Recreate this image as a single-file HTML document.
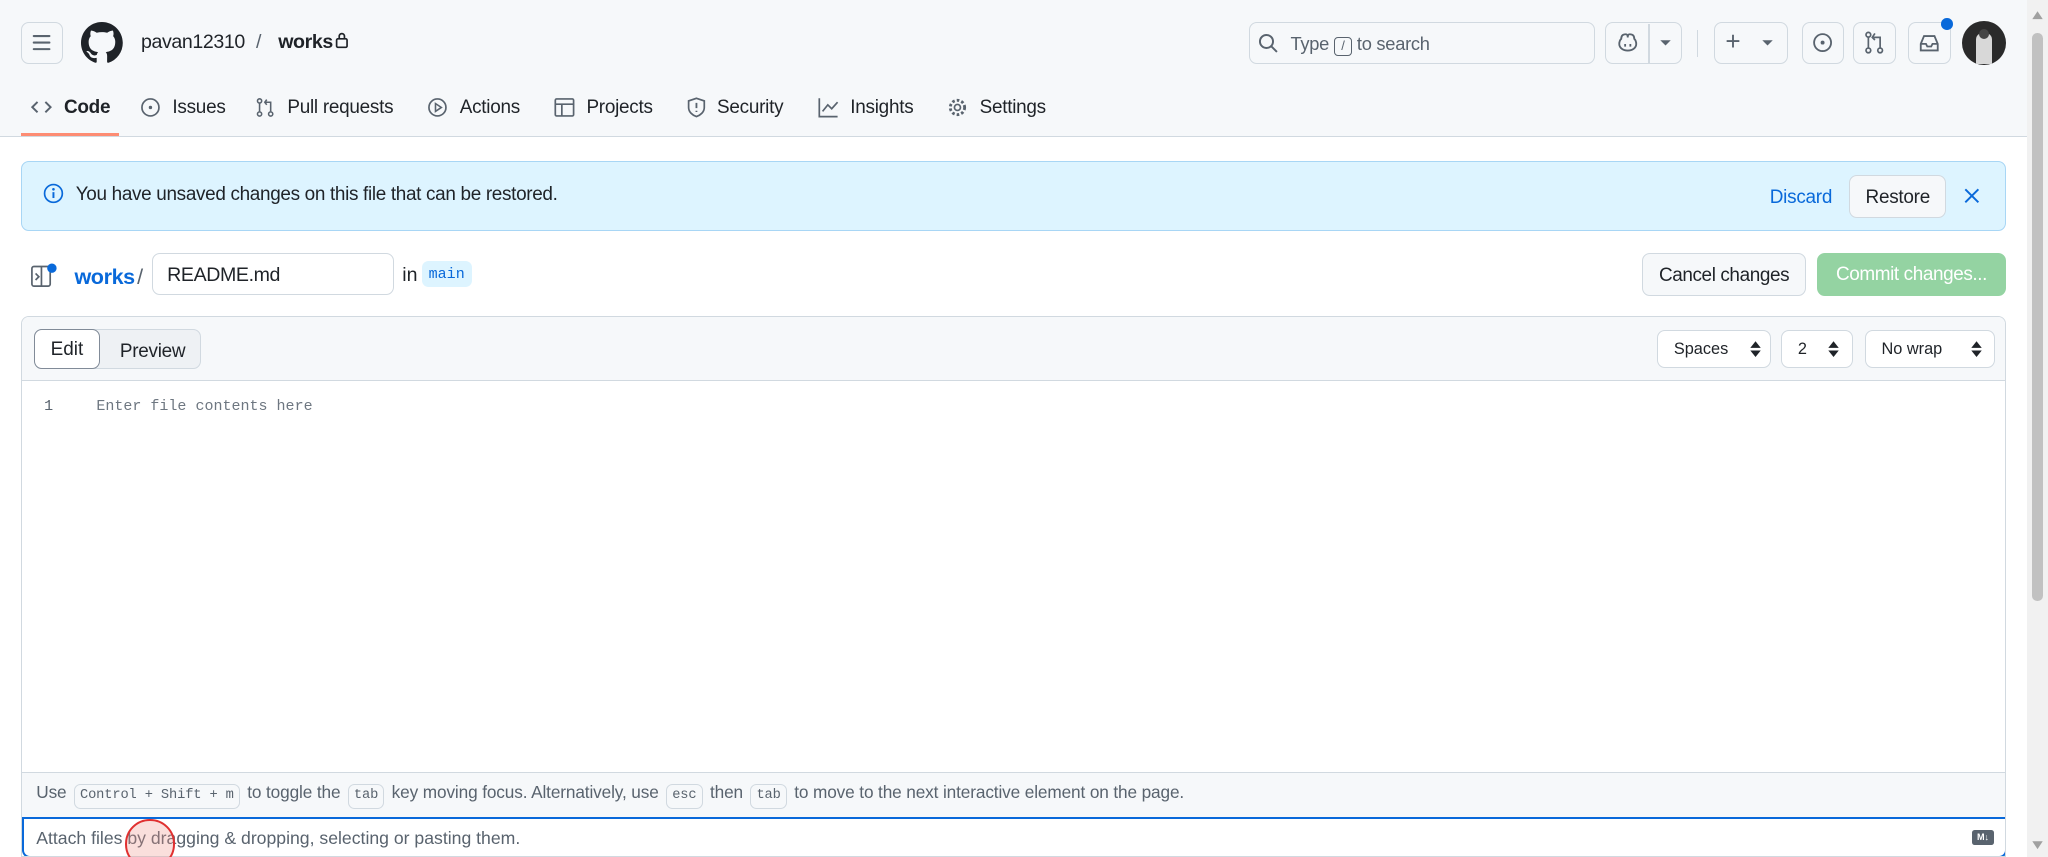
<!DOCTYPE html>
<html><head><meta charset="utf-8"><style>
*{box-sizing:border-box;margin:0;padding:0}
html,body{width:2048px;height:857px;overflow:hidden;background:#fff}
#z{zoom:1.30612;width:1568px;height:656px;position:relative;font-family:"Liberation Sans",sans-serif;color:#1f2328;font-size:14px}
.a{position:absolute}
.btn{position:absolute;border:1px solid #d1d9e0;border-radius:6px;background:#f6f8fa}
.ic{position:absolute}
svg{display:block}
.t{position:absolute;white-space:nowrap}
.n{position:absolute;white-space:nowrap;font-size:14.5px;top:74px;letter-spacing:-0.2px}
.kbd{display:inline-block;border:1px solid #d1d9e0;border-radius:5px;background:#f6f8fa;font-family:"Liberation Mono",monospace;font-size:10.5px;padding:2px 4px;margin:0 2px;line-height:13px}
</style></head><body><div id="z">
<div class="a" style="left:0;top:0;width:1552px;height:105px;background:#f6f8fa;border-bottom:1px solid #d1d9e0"></div>
<div class="btn" style="left:16px;top:17px;width:32px;height:32px"><svg width="30" height="30" viewBox="0 0 30 30"><path d="M9 10h12M9 15h12M9 20h12" stroke="#59636e" stroke-width="1.6" stroke-linecap="round"/></svg></div>
<svg class="ic" style="left:62px;top:17px" width="32" height="32" viewBox="0 0 16 16"><path fill="#1f2328" d="M8 0C3.58 0 0 3.58 0 8c0 3.540 2.290 6.530 5.470 7.590.4.07.55-.17.55-.38 0-.19-.01-.82-.01-1.49-2.010.37-2.530-.49-2.690-.94-.09-.23-.48-.94-.82-1.130-.28-.15-.68-.52-.01-.53.63-.01 1.080.58 1.230.82.72 1.210 1.870.87 2.330.66.07-.52.28-.87.51-1.070-1.780-.2-3.640-.89-3.640-3.950 0-.87.31-1.590.82-2.150-.08-.2-.36-1.020.08-2.120 0 0 .67-.21 2.200.82.64-.18 1.320-.27 2-.27.68 0 1.360.09 2 .27 1.530-1.040 2.200-.82 2.200-.82.44 1.100.16 1.920.08 2.120.51.56.82 1.270.82 2.150 0 3.070-1.870 3.750-3.650 3.950.29.25.54.73.54 1.480 0 1.070-.01 1.930-.01 2.200 0 .21.15.46.55.38A8.013 8.013 0 0016 8c0-4.420-3.580-8-8-8z"/></svg>
<div class="t" style="left:108px;top:24px;font-size:15px;letter-spacing:-0.3px">pavan12310</div>
<div class="t" style="left:196px;top:24px;font-size:15px;color:#59636e">/</div>
<div class="t" style="left:213px;top:24px;font-size:15px;font-weight:bold;letter-spacing:-0.3px">works</div>
<svg class="ic" style="left:256px;top:24px" width="12" height="14" viewBox="0 0 12 14"><rect x="2" y="6" width="8" height="6.5" rx="1" fill="none" stroke="#1f2328" stroke-width="1.3"/><path d="M4 6V4a2 2 0 014 0v2" fill="none" stroke="#1f2328" stroke-width="1.3"/></svg>
<div class="btn" style="left:956px;top:17px;width:265px;height:32px;background:#f6f8fa"></div>
<svg class="ic" style="left:963px;top:25px" width="16" height="16" viewBox="0 0 16 16"><circle cx="6.5" cy="6.5" r="5" fill="none" stroke="#59636e" stroke-width="1.5"/><path d="M10 10l4.5 4.5" stroke="#59636e" stroke-width="1.5"/></svg>
<div class="t" style="left:988px;top:25px;color:#59636e;font-size:14px;letter-spacing:-0.2px">Type <span style="display:inline-block;border:1px solid #59636e;border-radius:3px;font-size:10px;width:14px;text-align:center;line-height:13px">/</span> to search</div>
<div class="btn" style="left:1229px;top:17px;width:59px;height:32px"></div>
<div class="a" style="left:1262px;top:18px;width:1px;height:30px;background:#d1d9e0"></div>
<svg class="ic" style="left:1237px;top:24px" width="18" height="18" viewBox="0 0 18 18"><path d="M4 6c0-3 2-3.5 3.5-3.5S9 4 9 5c0-1 0-2.5 1.5-2.5S14 3 14 6c1 1 1.5 2 1.5 4 0 3-3 5-6.5 5s-6.5-2-6.5-5c0-2 .5-3 1.5-4z" fill="none" stroke="#59636e" stroke-width="1.4"/><path d="M7 10v2M11 10v2" stroke="#59636e" stroke-width="1.4"/></svg>
<svg class="ic" style="left:1270px;top:30px" width="10" height="6"><path d="M1 1h8L5 5z" fill="#59636e"/></svg>
<div class="a" style="left:1299px;top:23px;width:1px;height:21px;background:#d1d9e0"></div>
<div class="btn" style="left:1312px;top:17px;width:57px;height:32px"></div>
<div class="t" style="left:1321px;top:20px;font-size:20px;color:#59636e">+</div>
<svg class="ic" style="left:1348px;top:30px" width="10" height="6"><path d="M1 1h8L5 5z" fill="#59636e"/></svg>
<div class="btn" style="left:1380px;top:17px;width:32px;height:32px"><svg width="30" height="30"><circle cx="15" cy="15" r="6.5" fill="none" stroke="#59636e" stroke-width="1.4"/><circle cx="15" cy="15" r="1.5" fill="#59636e"/></svg></div>
<div class="btn" style="left:1419px;top:17px;width:33px;height:32px"><svg width="31" height="30"><circle cx="11" cy="9" r="1.8" fill="none" stroke="#59636e" stroke-width="1.3"/><circle cx="11" cy="21" r="1.8" fill="none" stroke="#59636e" stroke-width="1.3"/><circle cx="20" cy="21" r="1.8" fill="none" stroke="#59636e" stroke-width="1.3"/><path d="M11 11v8M20 19v-8h-5M16 8l-2 3 2 2" fill="none" stroke="#59636e" stroke-width="1.3"/></svg></div>
<div class="btn" style="left:1461px;top:17px;width:33px;height:32px"><svg width="31" height="30"><path d="M9 16l2.5-6h8l2.5 6v5h-13z M9 16h4l1 2h3l1-2h4" fill="none" stroke="#59636e" stroke-width="1.4"/></svg></div>
<div class="a" style="left:1486px;top:14px;width:9px;height:9px;border-radius:50%;background:#0969da"></div>
<div class="a" style="left:1502px;top:16px;width:34px;height:34px;border-radius:50%;background:#2a2a2a;overflow:hidden"><div class="a" style="left:11px;top:9px;width:12px;height:24px;background:#d8d8d8;border-radius:5px 5px 0 0"></div><div class="a" style="left:13px;top:6px;width:8px;height:8px;border-radius:50%;background:#444"></div></div>
<svg class="ic" style="left:24px;top:75px" width="16" height="14" viewBox="0 0 16 14"><path d="M5 3L1 7l4 4M11 3l4 4-4 4" fill="none" stroke="#59636e" stroke-width="1.5"/></svg>
<div class="n" style="left:49px;font-weight:bold">Code</div>
<div class="a" style="left:16px;top:102px;width:75px;height:2px;background:#fd8c73"></div>
<svg class="ic" style="left:107px;top:74px" width="16" height="16"><circle cx="8" cy="8" r="6.5" fill="none" stroke="#59636e" stroke-width="1.3"/><circle cx="8" cy="8" r="1.3" fill="#59636e"/></svg>
<div class="n" style="left:132px">Issues</div>
<svg class="ic" style="left:195px;top:74px" width="16" height="16"><circle cx="3.5" cy="3" r="1.6" fill="none" stroke="#59636e" stroke-width="1.2"/><circle cx="3.5" cy="13" r="1.6" fill="none" stroke="#59636e" stroke-width="1.2"/><circle cx="12" cy="13" r="1.6" fill="none" stroke="#59636e" stroke-width="1.2"/><path d="M3.5 5v6M12 11V4H8M9 2L7.5 4 9 6" fill="none" stroke="#59636e" stroke-width="1.2"/></svg>
<div class="n" style="left:220px">Pull requests</div>
<svg class="ic" style="left:327px;top:74px" width="16" height="16"><circle cx="8" cy="8" r="6.5" fill="none" stroke="#59636e" stroke-width="1.3"/><path d="M6.5 5v6l4.5-3z" fill="none" stroke="#59636e" stroke-width="1.2"/></svg>
<div class="n" style="left:352px">Actions</div>
<svg class="ic" style="left:424px;top:74px" width="16" height="16"><rect x="1" y="1.5" width="14" height="13" rx="1" fill="none" stroke="#59636e" stroke-width="1.3"/><path d="M1 5.5h14M6 5.5v9" stroke="#59636e" stroke-width="1.3"/></svg>
<div class="n" style="left:449px">Projects</div>
<svg class="ic" style="left:525px;top:74px" width="16" height="16"><path d="M8 1l6 2v5c0 3.5-3 6-6 7-3-1-6-3.5-6-7V3z" fill="none" stroke="#59636e" stroke-width="1.3"/><path d="M8 4.5v4M8 10.5v1" stroke="#59636e" stroke-width="1.4"/></svg>
<div class="n" style="left:549px">Security</div>
<svg class="ic" style="left:626px;top:74px" width="16" height="16"><path d="M1 1v14h14M3.5 11l4-5 3 3 4.5-5" fill="none" stroke="#59636e" stroke-width="1.3"/></svg>
<div class="n" style="left:651px">Insights</div>
<svg class="ic" style="left:725px;top:74px" width="16" height="16"><circle cx="8" cy="8" r="2.3" fill="none" stroke="#59636e" stroke-width="1.3"/><circle cx="8" cy="8" r="5.5" fill="none" stroke="#59636e" stroke-width="2.2" stroke-dasharray="2 1.6"/></svg>
<div class="n" style="left:750px">Settings</div>
<div class="a" style="left:16px;top:123px;width:1520px;height:54px;background:#ddf4ff;border:1px solid #a8d6f5;border-radius:6px"></div>
<svg class="ic" style="left:33px;top:140px" width="16" height="16"><circle cx="8" cy="8" r="6.8" fill="none" stroke="#0969da" stroke-width="1.3"/><path d="M8 7v4.5" stroke="#0969da" stroke-width="1.5"/><circle cx="8" cy="4.8" r="1" fill="#0969da"/></svg>
<div class="t" style="left:58px;top:141px;font-size:14.5px;letter-spacing:-0.25px">You have unsaved changes on this file that can be restored.</div>
<div class="t" style="left:1355px;top:143px;font-size:14.5px;color:#0969da;letter-spacing:-0.2px">Discard</div>
<div class="btn" style="left:1416px;top:134px;width:74px;height:33px;font-size:14.5px;text-align:center;line-height:33px;letter-spacing:-0.2px">Restore</div>
<svg class="ic" style="left:1504px;top:144px" width="12" height="12"><path d="M1 1l10 10M11 1L1 11" stroke="#0969da" stroke-width="1.5"/></svg>
<svg class="ic" style="left:24px;top:201px" width="20" height="20"><rect x="0.7" y="2.7" width="14" height="15" rx="1.5" fill="none" stroke="#59636e" stroke-width="1.3"/><path d="M8 3v15M3.5 8l2.5 2.5-2.5 2.5" fill="none" stroke="#59636e" stroke-width="1.3"/><circle cx="16" cy="4" r="3.6" fill="#0969da"/></svg>
<div class="t" style="left:57px;top:202px;font-size:16.5px;font-weight:bold;color:#0969da;letter-spacing:-0.3px">works</div>
<div class="t" style="left:105px;top:202px;font-size:16.5px;color:#59636e">/</div>
<div class="a" style="left:116px;top:194px;width:186px;height:32px;border:1px solid #d1d9e0;border-radius:6px;background:#fff"></div>
<div class="t" style="left:128px;top:202px;font-size:15px;letter-spacing:-0.3px">README.md</div>
<div class="t" style="left:308px;top:202px;font-size:15px">in</div>
<div class="a" style="left:323px;top:200px;width:38px;height:20px;background:#ddf4ff;border-radius:5px;font-family:'Liberation Mono',monospace;font-size:11.5px;color:#0969da;text-align:center;line-height:20px">main</div>
<div class="btn" style="left:1257px;top:194px;width:126px;height:33px;font-size:14.5px;text-align:center;line-height:34px;letter-spacing:-0.3px">Cancel changes</div>
<div class="a" style="left:1391px;top:194px;width:145px;height:33px;border-radius:6px;background:#94d3a2;color:#fff;font-size:14.5px;text-align:center;line-height:34px;letter-spacing:-0.3px">Commit changes...</div>
<div class="a" style="left:16px;top:242px;width:1520px;height:414px;border:1px solid #d1d9e0;border-radius:6px 6px 0 0;overflow:hidden">
<div class="a" style="left:0;top:0;width:1520px;height:49px;background:#f6f8fa;border-bottom:1px solid #d1d9e0"></div>
<div class="a" style="left:9px;top:9px;width:128px;height:31px;border:1px solid #d1d9e0;border-radius:6px;background:#eef1f4"></div>
<div class="a" style="left:9px;top:9px;width:51px;height:31px;border:1px solid #818b98;border-radius:6px;background:#fff;text-align:center;line-height:31px;font-size:14.5px">Edit</div>
<div class="t" style="left:75px;top:18px;font-size:14.5px;letter-spacing:-0.2px">Preview</div>
<div class="btn" style="left:1252px;top:10px;width:87px;height:29px;background:#fff;font-size:12.5px;line-height:29px;padding-left:12px">Spaces</div>
<div class="btn" style="left:1347px;top:10px;width:55px;height:29px;background:#fff;font-size:12.5px;line-height:29px;padding-left:12px">2</div>
<div class="btn" style="left:1411px;top:10px;width:100px;height:29px;background:#fff;font-size:12.5px;line-height:29px;padding-left:12px">No wrap</div>
<div class="t" style="left:17px;top:61px;font-family:'Liberation Mono',monospace;font-size:11.5px;color:#59636e">1</div>
<div class="t" style="left:57px;top:61px;font-family:'Liberation Mono',monospace;font-size:11.5px;color:#6e7781">Enter file contents here</div>
<div class="a" style="left:0;top:348px;width:1520px;height:35px;background:#f6f8fa;border-top:1px solid #d1d9e0"></div>
<div class="t" style="left:11px;top:356px;font-size:13.2px;color:#59636e;letter-spacing:-0.1px">Use <span class="kbd">Control + Shift + m</span> to toggle the <span class="kbd">tab</span> key moving focus. Alternatively, use <span class="kbd">esc</span> then <span class="kbd">tab</span> to move to the next interactive element on the page.</div>
<div class="a" style="left:0;top:383px;width:1520px;height:31px;border:2px solid #0969da;border-radius:0 0 6px 6px"></div>
<div class="t" style="left:11px;top:391px;font-size:13.5px;color:#59636e">Attach files by dragging &amp; dropping, selecting or pasting them.</div>
<div class="a" style="left:1493px;top:393px;width:17px;height:11px;background:#59636e;border-radius:2px;color:#fff;font-size:7px;font-weight:bold;text-align:center;line-height:11px">M↓</div>
</div>
<svg class="ic" style="left:1339px;top:260px" width="10" height="14"><path d="M1 6l4-5 4 5zM1 8l4 5 4-5z" fill="#1f2328"/></svg>
<svg class="ic" style="left:1399px;top:260px" width="10" height="14"><path d="M1 6l4-5 4 5zM1 8l4 5 4-5z" fill="#1f2328"/></svg>
<svg class="ic" style="left:1508px;top:260px" width="10" height="14"><path d="M1 6l4-5 4 5zM1 8l4 5 4-5z" fill="#1f2328"/></svg>
<div class="a" style="left:96px;top:627px;width:38px;height:38px;border-radius:50%;border:2px solid #e03030;background:rgba(240,150,140,.3)"></div>
<div class="a" style="left:1552px;top:0;width:16px;height:656px;background:#f1f1f1"></div>
<div class="a" style="left:1556px;top:25px;width:8px;height:435px;background:#c1c1c1;border-radius:4px"></div>
<svg class="ic" style="left:1555px;top:8px" width="10" height="8"><path d="M1 7l4-6 4 6z" fill="#a0a0a0"/></svg>
<svg class="ic" style="left:1555px;top:643px" width="10" height="8"><path d="M1 1l4 6 4-6z" fill="#a0a0a0"/></svg>
</div></body></html>
